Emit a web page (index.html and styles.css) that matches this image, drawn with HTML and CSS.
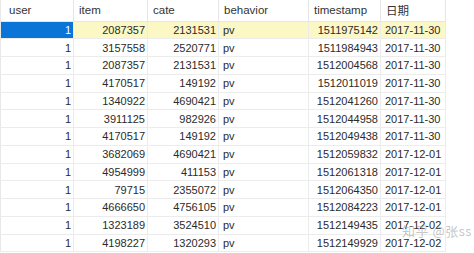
FILE: index.html
```html
<!DOCTYPE html>
<html>
<head>
<meta charset="utf-8">
<link rel="stylesheet" href="styles.css">
</head>
<body>
<div class="wrap">
<table class="grid">
<colgroup>
<col class="c-user"><col class="c-item"><col class="c-cate"><col class="c-beh"><col class="c-ts"><col class="c-date">
</colgroup>
<thead>
<tr><th class="first">user</th><th>item</th><th>cate</th><th>behavior</th><th>timestamp</th><th>日期</th></tr>
</thead>
<tbody>
<tr class="current"><td class="num sel">1</td><td class="num">2087357</td><td class="num">2131531</td><td>pv</td><td class="num">1511975142</td><td>2017-11-30</td></tr>
<tr><td class="num">1</td><td class="num">3157558</td><td class="num">2520771</td><td>pv</td><td class="num">1511984943</td><td>2017-11-30</td></tr>
<tr><td class="num">1</td><td class="num">2087357</td><td class="num">2131531</td><td>pv</td><td class="num">1512004568</td><td>2017-11-30</td></tr>
<tr><td class="num">1</td><td class="num">4170517</td><td class="num">149192</td><td>pv</td><td class="num">1512011019</td><td>2017-11-30</td></tr>
<tr><td class="num">1</td><td class="num">1340922</td><td class="num">4690421</td><td>pv</td><td class="num">1512041260</td><td>2017-11-30</td></tr>
<tr><td class="num">1</td><td class="num">3911125</td><td class="num">982926</td><td>pv</td><td class="num">1512044958</td><td>2017-11-30</td></tr>
<tr><td class="num">1</td><td class="num">4170517</td><td class="num">149192</td><td>pv</td><td class="num">1512049438</td><td>2017-11-30</td></tr>
<tr><td class="num">1</td><td class="num">3682069</td><td class="num">4690421</td><td>pv</td><td class="num">1512059832</td><td>2017-12-01</td></tr>
<tr><td class="num">1</td><td class="num">4954999</td><td class="num">411153</td><td>pv</td><td class="num">1512061318</td><td>2017-12-01</td></tr>
<tr><td class="num">1</td><td class="num">79715</td><td class="num">2355072</td><td>pv</td><td class="num">1512064350</td><td>2017-12-01</td></tr>
<tr><td class="num">1</td><td class="num">4666650</td><td class="num">4756105</td><td>pv</td><td class="num">1512084223</td><td>2017-12-01</td></tr>
<tr><td class="num">1</td><td class="num">1323189</td><td class="num">3524510</td><td>pv</td><td class="num">1512149435</td><td>2017-12-02</td></tr>
<tr><td class="num">1</td><td class="num">4198227</td><td class="num">1320293</td><td>pv</td><td class="num">1512149929</td><td>2017-12-02</td></tr>
</tbody>
</table>
<div class="watermark">知乎 @张ss</div>
</div>
</body>
</html>
```
FILE: styles.css
```css
html, body {
  margin: 0;
  padding: 0;
  background: #ffffff;
}
.wrap {
  position: relative;
  width: 474px;
  height: 253px;
  overflow: hidden;
}
.grid {
  border-collapse: collapse;
  table-layout: fixed;
  width: 445px;
  font-family: "Liberation Sans", Arial, "Noto Sans CJK SC", sans-serif;
  font-size: 11px;
  color: #2b2b2b;
}
.c-user { width: 73px; }
.c-item { width: 74px; }
.c-cate { width: 71px; }
.c-beh { width: 90px; }
.c-ts { width: 72px; }
.c-date { width: 65px; }
.grid th {
  height: 21px;
  padding: 0 4px 0 5px;
  text-align: left;
  font-weight: normal;
  font-size: 11.5px;
  color: #333;
  border-right: 1px solid #e6e6e6;
  border-bottom: 1px solid #e6e6e6;
  box-sizing: border-box;
}
.grid th.first {
  padding-left: 8px;
  border-left: 1px solid #e8e8e8;
}
.grid td {
  height: 17.75px;
  padding: 0 2px 0 4px;
  border-right: 1px solid #ececec;
  border-bottom: 1px solid #ececec;
  white-space: nowrap;
  overflow: hidden;
  box-sizing: border-box;
  line-height: 16px;
}
.grid td:first-child {
  border-left: 1px solid #e8e8e8;
}
.grid td.num {
  text-align: right;
  padding-right: 2px;
}
.grid tr.current td {
  background: #fcf8c6;
}
.grid tr.current td.sel {
  background: #0a75d6;
  color: #ffffff;
}
.watermark {
  position: absolute;
  left: 402px;
  top: 221px;
  font-family: "Noto Sans CJK SC", sans-serif;
  font-size: 13px;
  color: rgba(150, 150, 150, 0.55);
  letter-spacing: 0.5px;
}
```
